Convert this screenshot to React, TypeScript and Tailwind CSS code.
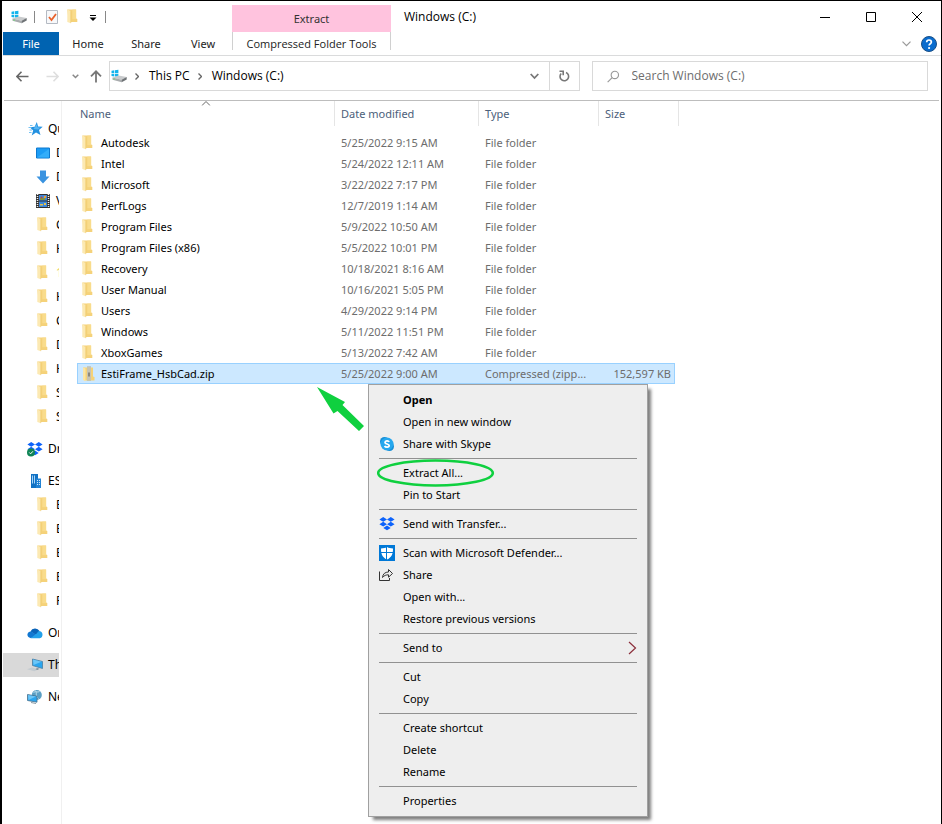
import type { ReactNode } from 'react'
import clsx from 'clsx'

interface FileRow {
    name: string
    date: string
    type: string
    size?: string
    zip?: boolean
}

interface TreeItem {
    label: string
    icon: ReactNode
    child?: boolean
    faded?: boolean
}

interface MenuEntry {
    label: string
    icon?: ReactNode
    bold?: boolean
    submenu?: boolean
    circled?: boolean
}

function DriveIcon() {
    return (
        <svg width="16" height="16" viewBox="0 0 16 16" className="shrink-0">
            <path d="M.5 2.700 3.300 2.300v2.700H.500zM4 2.200 7.400 1.700v3.300H4zM.5 5.700h2.800v2.700L.5 8zM4 5.700h3.400v3.300L4 8.500z" fill="#12b3ec" />
            <path d="M1.500 9.600 7.500 7.400l8.200 1.700-5 2.600z" fill="#c9cbcd" />
            <path d="M1.500 9.600v2.200l9.200 2.400v-2.500z" fill="#a9acae" />
            <path d="m10.600 11.700 5.100-2.600v2.300l-5.100 2.800z" fill="#6f7376" />
            <path d="M2.500 11.200h1.400" stroke="#6fe07a" />
        </svg>
    )
}

function FolderIcon() {
    return (
        <svg width="16" height="16" viewBox="0.7 0.9 16 16" className="shrink-0">
            <path d="M3 1.500h8.800v9l1.200.5v3H4.500z" fill="#f5d27a" />
            <path d="M8 1.500h3.800v9.500H8z" fill="#f9dc8b" />
            <path d="M3 1.500 6.500 3v12.200L3 13.800z" fill="#fce9b2" />
            <path d="M6.500 3v12" stroke="#eec766" strokeWidth=".6" />
        </svg>
    )
}

function ZipIcon() {
    return (
        <svg width="16" height="16" viewBox="0 0 16 16" className="shrink-0">
            <path d="M3 1.500h10v9l1.500.5v3.500H4z" fill="#f5d277" />
            <path d="M3 1.500 5.500 2.600v12.600L3 14z" fill="#fbe6a6" />
            <path d="M7 .5h4V14H7z" fill="#dcd8c4" />
            <path d="M8 .5V15M10 .5V15" stroke="#8b887c" strokeDasharray="1 1" />
            <path d="M9 6.500v4" stroke="#77746b" strokeWidth="1.500" />
        </svg>
    )
}

function StarIcon() {
    return (
        <svg width="16" height="16" viewBox="0 0 16 16" className="shrink-0">
            <path d="m9.800 1 1.300 4.500 4.600.3-3.700 3.200 1.500 5-4.500-2.600-4.300 3.200 1.500-5L2.700 6.300l5-.6z" fill="#2391e0" />
            <path d="m9.600 3.300.9 3 3 .3-2.500 2-4.500-.5z" fill="#55b5f2" />
            <path d="M3 4.500h2.500M1.500 6.500h3M2.500 9h2.500M2 11.500h2.500" stroke="#74c2f3" />
        </svg>
    )
}

function DesktopIcon() {
    return (
        <svg width="16" height="16" viewBox="0 0 16 16" className="shrink-0">
            <path d="M1.500 3h13v10h-13z" fill="#1c9cf5" stroke="#0d79cf" />
            <path d="M2 12.500 14 4v8.500z" fill="#33adfa" />
        </svg>
    )
}

function DownloadIcon() {
    return (
        <svg width="16" height="16" viewBox="0 0 16 16" className="shrink-0">
            <path d="M5 1.500h6v6h3.500L8 14.500 1.500 7.500H5z" fill="#3a93e0" />
        </svg>
    )
}

function VideoIcon() {
    return (
        <svg width="16" height="16" viewBox="0 0 16 16" className="shrink-0">
            <path d="M1 1h14v14H1z" fill="#333" />
            <path d="M2.500 1v14M13.500 1v14" stroke="#eee" strokeWidth="1.500" strokeDasharray="1 1" />
            <path d="M4 2h8v5.500H4zM4 8.500h8V14H4z" fill="#3b86dc" />
            <path d="M5 5h5v2H5z" fill="#7c9445" />
            <circle cx="10" cy="4" r="1.300" fill="#e8a13c" />
            <circle cx="6.500" cy="4.500" r="1" fill="#c0433a" />
            <path d="M5 11h3v1.500H5zM9 10h2v2H9z" fill="#e3c04e" />
        </svg>
    )
}

function DropboxShape({ y = 0 }: { y?: number }) {
    return (
        <path
            transform={`translate(0 ${y})`}
            d="M4.200 1 8 3.400 4.200 5.800.4 3.400zM11.800 1l3.800 2.400-3.800 2.400L8 3.400zM4.200 5.800 8 8.200l-3.800 2.400L.4 8.200zM11.800 5.800l3.800 2.400-3.800 2.400L8 8.200zM8 9.600l3.700 2.300L8 14.200l-3.700-2.300z"
            fill="#0d63fb"
        />
    )
}

function DropboxIcon() {
    return (
        <svg width="16" height="16" viewBox="0 0 16 16" className="shrink-0">
            <DropboxShape />
        </svg>
    )
}

function DropboxSyncedIcon() {
    return (
        <svg width="16" height="16" viewBox="0 0 16 16" className="shrink-0">
            <DropboxShape />
            <circle cx="4" cy="11.500" r="4" fill="#0f8556" />
            <path d="m2.300 11.500 1.300 1.300 2.300-2.500" fill="none" stroke="#fff" />
        </svg>
    )
}

function BuildingIcon() {
    return (
        <svg width="16" height="16" viewBox="0 0 16 16" className="shrink-0">
            <path d="M4 1h7v14H4z" fill="#1272c4" />
            <path d="M9 5.500h5V15H9z" fill="#2283d4" />
            <path d="M5.500 2.500v9M7.500 2.500v9" stroke="#a8d5f7" strokeDasharray="8 1" />
            <path d="M10.500 7v6M12.500 7v6" stroke="#cfe8fb" strokeDasharray="1 1" />
        </svg>
    )
}

function CloudIcon() {
    return (
        <svg width="16" height="16" viewBox="0 0 16 16" className="shrink-0">
            <path d="M3.500 6.500a5 5 0 0 1 9-.5L9 10z" fill="#0a64b8" />
            <path d="M3.500 13a3.300 3.300 0 1 1 1-6.500L12 12z" fill="#1177d1" />
            <path d="M3.500 13.200 10 8.300a3 3 0 0 1 2.500-2.300 3.700 3.700 0 0 1 .3 7.200z" fill="#22a0ea" />
        </svg>
    )
}

function ComputerIcon() {
    return (
        <svg width="16" height="16" viewBox="0 0 16 16" className="shrink-0">
            <path d="m5.500 2 10 2.500v7l-10-3z" fill="#2aa5ee" stroke="#4b7fa3" strokeWidth=".8" />
            <path d="m6 2.500 8.500 2.300L6.500 8z" fill="#6cc6f7" />
            <path d="m0 12.300 5-1.800 6.500 1.800-4 2z" fill="#c4cbd0" />
            <path d="m10 11 2.500.7-2 1.200-2-.6z" fill="#7f8f9a" />
        </svg>
    )
}

function NetworkIcon() {
    return (
        <svg width="16" height="16" viewBox="0 0 16 16" className="shrink-0">
            <circle cx="9.800" cy="6" r="5" fill="#5b9fc4" />
            <path d="M6.500 3.500c2-2 4 .5 6-1M8.500 1.500c2 2-1 5 3 8" fill="none" stroke="#b9dcec" />
            <path d="m.5 5.500 9.500 1.700v6L.5 11.500z" fill="#2ba5ee" stroke="#49708b" strokeWidth=".8" />
            <path d="m1 6 8 1.600-7.500 3.500z" fill="#6cc6f7" />
            <path d="m4 13.500 5 1" stroke="#8b9ba5" />
        </svg>
    )
}

function SkypeIcon() {
    return (
        <svg width="16" height="16" viewBox="0 0 16 16" className="shrink-0">
            <circle cx="5.500" cy="5.500" r="4.500" fill="#168ed6" />
            <circle cx="10.500" cy="10.500" r="4.500" fill="#168ed6" />
            <circle cx="8" cy="8" r="6.500" fill="#25a7ee" />
            <path d="M10.200 5.900C9.500 4.400 6 4.400 6 6.400c0 2 4.200 1.100 4.200 3.200 0 2.200-3.900 2-4.600.3" fill="none" stroke="#fff" strokeWidth="1.700" />
        </svg>
    )
}

function DefenderIcon() {
    return (
        <svg width="16" height="16" viewBox="0 0 16 16" className="shrink-0">
            <path d="M0 0h16v16H0z" fill="#0078d7" />
            <path d="M2 3.400c2.500 0 4.300-.4 6-1.400 1.700 1 3.500 1.400 6 1.400 0 5.600-1.200 8.600-6 11.100-4.800-2.500-6-5.500-6-11.100z" fill="#fff" />
            <path d="M7.500 2v13M2 7.500h12" stroke="#0078d7" />
        </svg>
    )
}

function ShareIcon() {
    return (
        <svg width="16" height="16" viewBox="0 0 16 16" className="shrink-0" fill="none" stroke="#333">
            <path d="M.5 4.500v9h10V11" />
            <path d="M3.500 10.500c.3-3.500 2.500-5.500 6-5.500V2.500l4 4-4 3.700V7.800c-2.500 0-4.300.7-6 2.700z" />
        </svg>
    )
}

const files: FileRow[] = [
    { name: 'Autodesk', date: '5/25/2022 9:15 AM', type: 'File folder' },
    { name: 'Intel', date: '5/24/2022 12:11 AM', type: 'File folder' },
    { name: 'Microsoft', date: '3/22/2022 7:17 PM', type: 'File folder' },
    { name: 'PerfLogs', date: '12/7/2019 1:14 AM', type: 'File folder' },
    { name: 'Program Files', date: '5/9/2022 10:50 AM', type: 'File folder' },
    { name: 'Program Files (x86)', date: '5/5/2022 10:01 PM', type: 'File folder' },
    { name: 'Recovery', date: '10/18/2021 8:16 AM', type: 'File folder' },
    { name: 'User Manual', date: '10/16/2021 5:05 PM', type: 'File folder' },
    { name: 'Users', date: '4/29/2022 9:14 PM', type: 'File folder' },
    { name: 'Windows', date: '5/11/2022 11:51 PM', type: 'File folder' },
    { name: 'XboxGames', date: '5/13/2022 7:42 AM', type: 'File folder' },
    { name: 'EstiFrame_HsbCad.zip', date: '5/25/2022 9:00 AM', type: 'Compressed (zipp...', size: '152,597 KB', zip: true },
]

const folder = (label: string, faded = false): TreeItem => ({ label, icon: <FolderIcon />, child: true, faded })

const tree: TreeItem[][] = [
    [
        { label: 'Qu', icon: <StarIcon /> },
        { label: 'D', icon: <DesktopIcon />, child: true },
        { label: 'D', icon: <DownloadIcon />, child: true },
        { label: 'V', icon: <VideoIcon />, child: true },
        folder('C'),
        folder('H'),
        folder('1', true),
        folder('H'),
        folder('C'),
        folder('D'),
        folder('H'),
        folder('S'),
        folder('S'),
    ],
    [{ label: 'Dr', icon: <DropboxSyncedIcon /> }],
    [
        { label: 'ES', icon: <BuildingIcon /> },
        folder('E'),
        folder('E'),
        folder('E'),
        folder('E'),
        folder('F'),
    ],
    [{ label: 'On', icon: <CloudIcon /> }],
    [{ label: 'Th', icon: <ComputerIcon /> }],
    [{ label: 'Ne', icon: <NetworkIcon /> }],
]

const menu: MenuEntry[][] = [
    [
        { label: 'Open', bold: true },
        { label: 'Open in new window' },
        { label: 'Share with Skype', icon: <SkypeIcon /> },
    ],
    [{ label: 'Extract All...', circled: true }, { label: 'Pin to Start' }],
    [{ label: 'Send with Transfer...', icon: <DropboxIcon /> }],
    [
        { label: 'Scan with Microsoft Defender...', icon: <DefenderIcon /> },
        { label: 'Share', icon: <ShareIcon /> },
        { label: 'Open with...' },
        { label: 'Restore previous versions' },
    ],
    [{ label: 'Send to', submenu: true }],
    [{ label: 'Cut' }, { label: 'Copy' }],
    [{ label: 'Create shortcut' }, { label: 'Delete' }, { label: 'Rename' }],
    [{ label: 'Properties' }],
]

function TitleBar() {
    return (
        <header className="flex h-[31px]">
            <div className="flex w-[229px] shrink-0 items-center pl-2">
                <DriveIcon />
                <span className="ml-[7px] h-3 w-px bg-[#888]" />
                <button aria-label="Properties" className="ml-2.5">
                    <svg width="14" height="16" viewBox="0 0 14 16">
                        <path d="M1.500 1.500h11v13h-11z" fill="#f7f8fa" stroke="#b4bac3" />
                        <path d="m4 8 2.500 3L11 5" fill="none" stroke="#e8622c" strokeWidth="1.800" />
                    </svg>
                </button>
                <button aria-label="New folder" className="ml-1.5">
                    <FolderIcon />
                </button>
                <button aria-label="Customize Quick Access Toolbar" className="ml-2">
                    <svg width="8" height="8" viewBox="0 0 8 8">
                        <path d="M1 2.500h6" stroke="#000" />
                        <path d="M.5 4.500h7L4 8z" />
                    </svg>
                </button>
                <span className="ml-2 h-3 w-px bg-[#888]" />
            </div>
            <div className="flex h-[27px] w-[159px] shrink-0 items-center justify-center self-end bg-[#ffc3de] text-[11px] text-[#333]">Extract</div>
            <h1 className="ml-[13px] flex items-center whitespace-nowrap font-['Open_Sans','Noto_Sans',sans-serif] text-[12px]">Windows (C:)</h1>
            <div className="mr-px ml-auto flex">
                <button aria-label="Minimize" className="flex w-[46px] items-center justify-center">
                    <svg width="10" height="10" viewBox="0 0 10 10" stroke="#000">
                        <path d="M0 5.500h10" />
                    </svg>
                </button>
                <button aria-label="Maximize" className="flex w-[46px] items-center justify-center">
                    <svg width="10" height="10" viewBox="0 0 10 10" fill="none" stroke="#000">
                        <path d="M.5.5h9v9h-9z" />
                    </svg>
                </button>
                <button aria-label="Close" className="flex w-[46px] items-center justify-center">
                    <svg width="10" height="10" viewBox="0 0 10 10" stroke="#000">
                        <path d="m0 0 10 10M10 0 0 10" />
                    </svg>
                </button>
            </div>
        </header>
    )
}

function RibbonTabs() {
    return (
        <nav className="flex h-6 border-b border-[#dadbdc] text-[11px] text-[#222]">
            <div className="flex w-[229px] shrink-0">
                <button className="w-14 bg-[#0063b1] text-white">File</button>
                <button className="w-[58px]">Home</button>
                <button className="w-[58px]">Share</button>
                <button className="w-14">View</button>
            </div>
            <div className="flex w-[159px] shrink-0 justify-between">
                <span className="h-[18px] w-px bg-[#d0d0d0]" />
                <button className="whitespace-nowrap font-['Open_Sans','Noto_Sans',sans-serif]">Compressed Folder Tools</button>
                <span className="h-[18px] w-px bg-[#d0d0d0]" />
            </div>
            <div className="ml-auto flex items-center gap-2.5 pr-1">
                <button aria-label="Expand the Ribbon">
                    <svg width="9" height="6" viewBox="0 0 9 6" fill="none" stroke="#999" strokeWidth="1.200">
                        <path d="m.5.7 4 4 4-4" />
                    </svg>
                </button>
                <button aria-label="Help">
                    <svg width="16" height="16" viewBox="0 0 16 16">
                        <circle cx="8" cy="8" r="7.500" fill="#0a6cce" stroke="#1a4f86" />
                        <path d="M5.700 6.300c0-3 4.700-3 4.700-.2 0 1.700-2.300 1.600-2.300 3.500" fill="none" stroke="#fff" strokeWidth="1.700" />
                        <circle cx="8.100" cy="12" r="1.100" fill="#fff" />
                    </svg>
                </button>
            </div>
        </nav>
    )
}

function Crumb() {
    return (
        <svg width="4" height="7" viewBox="0 0 4 7" fill="none" stroke="#666" strokeWidth="1.400">
            <path d="m.5.5 3 3-3 3" />
        </svg>
    )
}

function AddressBar() {
    return (
        <div className="ml-px mr-0.5 flex h-[45px] items-center border-b border-[#bdbdbd] pb-1 pr-[11px] font-['Open_Sans','Noto_Sans',sans-serif] text-[12px]">
            <div className="flex w-[105px] shrink-0 items-center pl-3">
                <button aria-label="Back">
                    <svg width="13" height="11" viewBox="0 0 13 11" fill="none" stroke="#666" strokeWidth="1.600">
                        <path d="M12.500 5.500H1M5.500.7.900 5.500l4.600 4.800" />
                    </svg>
                </button>
                <button aria-label="Forward" className="ml-[17px]">
                    <svg width="13" height="11" viewBox="0 0 13 11" fill="none" stroke="#dedede" strokeWidth="1.600">
                        <path d="M.5 5.500H12M7.500.7l4.600 4.800-4.600 4.800" />
                    </svg>
                </button>
                <button aria-label="Recent locations" className="ml-[13px]">
                    <svg width="7" height="5" viewBox="0 0 7 5" fill="none" stroke="#888" strokeWidth="1.500">
                        <path d="m.7.7 2.800 2.800L6.300.7" />
                    </svg>
                </button>
                <button aria-label="Up" className="ml-[11px]">
                    <svg width="12" height="13" viewBox="0 0 12 13" fill="none" stroke="#777" strokeWidth="1.800">
                        <path d="M6 12.500V1.500M1 6.300l5-5 5 5" />
                    </svg>
                </button>
            </div>
            <div className="flex h-[30px] flex-[467] items-center border border-[#d9d9d9] pl-px">
                <DriveIcon />
                <span className="ml-2"><Crumb /></span>
                <button className="ml-2.5">This PC</button>
                <span className="ml-2"><Crumb /></span>
                <button className="ml-2.5">Windows (C:)</button>
                <button aria-label="Previous locations" className="ml-auto mr-2.5">
                    <svg width="9" height="7" viewBox="0 0 9 7" fill="none" stroke="#777" strokeWidth="1.800">
                        <path d="m.7 1 3.800 4L8.300 1" />
                    </svg>
                </button>
                <button aria-label="Refresh" className="flex h-full w-[30px] items-center justify-center border-l border-[#d9d9d9]">
                    <svg width="12" height="12" viewBox="0 0 12 12" fill="none" stroke="#777" strokeWidth="1.600">
                        <path d="M8 2.500a4.300 4.300 0 1 1-4.800 1" />
                        <path d="M1.500 1.300h3.700v4" />
                    </svg>
                </button>
            </div>
            <label className="ml-3 flex h-[30px] flex-[320] items-center border border-[#d9d9d9] pl-3.5">
                <svg width="14" height="13" viewBox="0 0 14 13" fill="none" stroke="#999" strokeWidth="1.200">
                    <circle cx="8.500" cy="4.800" r="4" />
                    <path d="M5.600 7.700.7 12.500" />
                </svg>
                <input
                    type="search"
                    aria-label="Search Windows (C:)"
                    placeholder="Search Windows (C:)"
                    className="ml-3 w-full min-w-0 outline-none placeholder:text-[#6d6d6d]"
                />
            </label>
        </div>
    )
}

function Sidebar() {
    return (
        <aside className="flex w-[59px] shrink-0 flex-col gap-2 self-stretch border-r border-[#f0f0f0] pr-0.5 pt-4">
            {tree.map((group, i) => (
                <ul key={i}>
                    {group.map((item, j) => (
                        <li
                            key={j}
                            className={clsx(
                                'flex h-6 items-center overflow-hidden text-[12px]',
                                item.child ? 'pl-8' : 'pl-6',
                                item.label === 'Th' && 'bg-[#d9d9d9]',
                                item.faded && 'text-[#e8cf55]'
                            )}
                        >
                            {item.icon}
                            <span className="ml-[5px]">{item.label}</span>
                        </li>
                    ))}
                </ul>
            ))}
        </aside>
    )
}

function FileTable() {
    const picked = 'border-y border-[#99d1ff] bg-[#cce8ff]'

    return (
        <table className="w-[602px] table-fixed border-separate border-spacing-0 text-left">
            <colgroup>
                <col className="w-[258px]" />
                <col className="w-[144px]" />
                <col className="w-[120px]" />
                <col className="w-[76px]" />
                <col className="w-1" />
            </colgroup>
            <thead className="text-[#4c607a]">
                <tr className="h-[25px]">
                    <th className="relative border-r border-[#e5e5e5] pl-[3px] font-normal">
                        Name
                        <svg width="9" height="5" viewBox="0 0 9 5" fill="none" stroke="#666" className="absolute left-1/2 top-0 -translate-x-1/2">
                            <path d="m.5 4.500 4-4 4 4" />
                        </svg>
                    </th>
                    <th className="border-r border-[#e5e5e5] pl-1.5 font-normal">Date modified</th>
                    <th className="border-r border-[#e5e5e5] pl-1.5 font-normal">Type</th>
                    <th colSpan={2} className="border-r border-[#e5e5e5] pl-1.5 font-normal">Size</th>
                </tr>
                <tr className="h-1.5">
                    <td colSpan={5} />
                </tr>
            </thead>
            <tbody className="text-[#6d6d6d]">
                {files.map((file) => (
                    <tr key={file.name} className="h-[21px]">
                        <td className={clsx('text-black', file.zip && 'border-l', file.zip && picked)}>
                            <div className={clsx('flex items-center gap-[5px]', file.zip ? 'pl-0.5' : 'pl-[3px]')}>
                                {file.zip ? <ZipIcon /> : <FolderIcon />}
                                {file.name}
                            </div>
                        </td>
                        <td className={clsx('pl-1.5', file.zip && picked)}>{file.date}</td>
                        <td className={clsx('whitespace-nowrap pl-1.5', file.zip && picked)}>{file.type}</td>
                        <td className={clsx('whitespace-nowrap pr-[3px] text-right', file.zip && 'border-r', file.zip && picked)}>{file.size}</td>
                        <td />
                    </tr>
                ))}
            </tbody>
        </table>
    )
}

function ContextMenu() {
    return (
        <div
            role="menu"
            className="absolute left-[291px] top-[283px] w-[280px] border border-[#a0a0a0] bg-[#eee] py-1 shadow-[4px_4px_3px_-1px_rgba(0,0,0,0.5)]"
        >
            {menu.map((section, i) => (
                <div key={i}>
                    {i > 0 && <hr className="mx-2.5 my-[3px] border-[#919191]" />}
                    {section.map((entry) => (
                        <button
                            key={entry.label}
                            role="menuitem"
                            className={clsx('relative flex h-[22px] w-full items-center px-2.5', entry.bold && 'font-bold')}
                        >
                            <span className="mr-2 w-4">{entry.icon}</span>
                            {entry.label}
                            {entry.submenu && (
                                <svg width="9" height="14" viewBox="0 0 9 14" fill="none" stroke="#8c2f3c" strokeWidth="1.200" className="ml-auto">
                                    <path d="m1 1 6.500 6L1 13" />
                                </svg>
                            )}
                            {entry.circled && (
                                <svg width="118" height="28" viewBox="0 0 118 28" className="absolute left-2 top-1/2 -translate-y-1/2">
                                    <ellipse cx="58.500" cy="14" rx="57.300" ry="12.500" fill="none" stroke="#0fd03f" strokeWidth="2.600" />
                                </svg>
                            )}
                        </button>
                    ))}
                </div>
            ))}
        </div>
    )
}

export default function App() {
    return (
        <div className="flex min-h-screen flex-col border-l-2 border-r border-t border-black bg-white pl-px font-['Noto_Sans','Open_Sans',sans-serif] text-[11px] leading-4 text-black">
            <TitleBar />
            <RibbonTabs />
            <AddressBar />
            <div className="flex flex-1">
                <Sidebar />
                <main className="relative ml-[15px] min-w-0 flex-1">
                    <FileTable />
                    <svg width="50" height="46" viewBox="0 0 50 46" className="absolute left-[239px] top-[285px]">
                        <path d="m1 1 28 15-2.500 3 21.500 21-5 5-21.500-20-4 2.500z" fill="#0fd03f" />
                    </svg>
                    <ContextMenu />
                </main>
            </div>
        </div>
    )
}
